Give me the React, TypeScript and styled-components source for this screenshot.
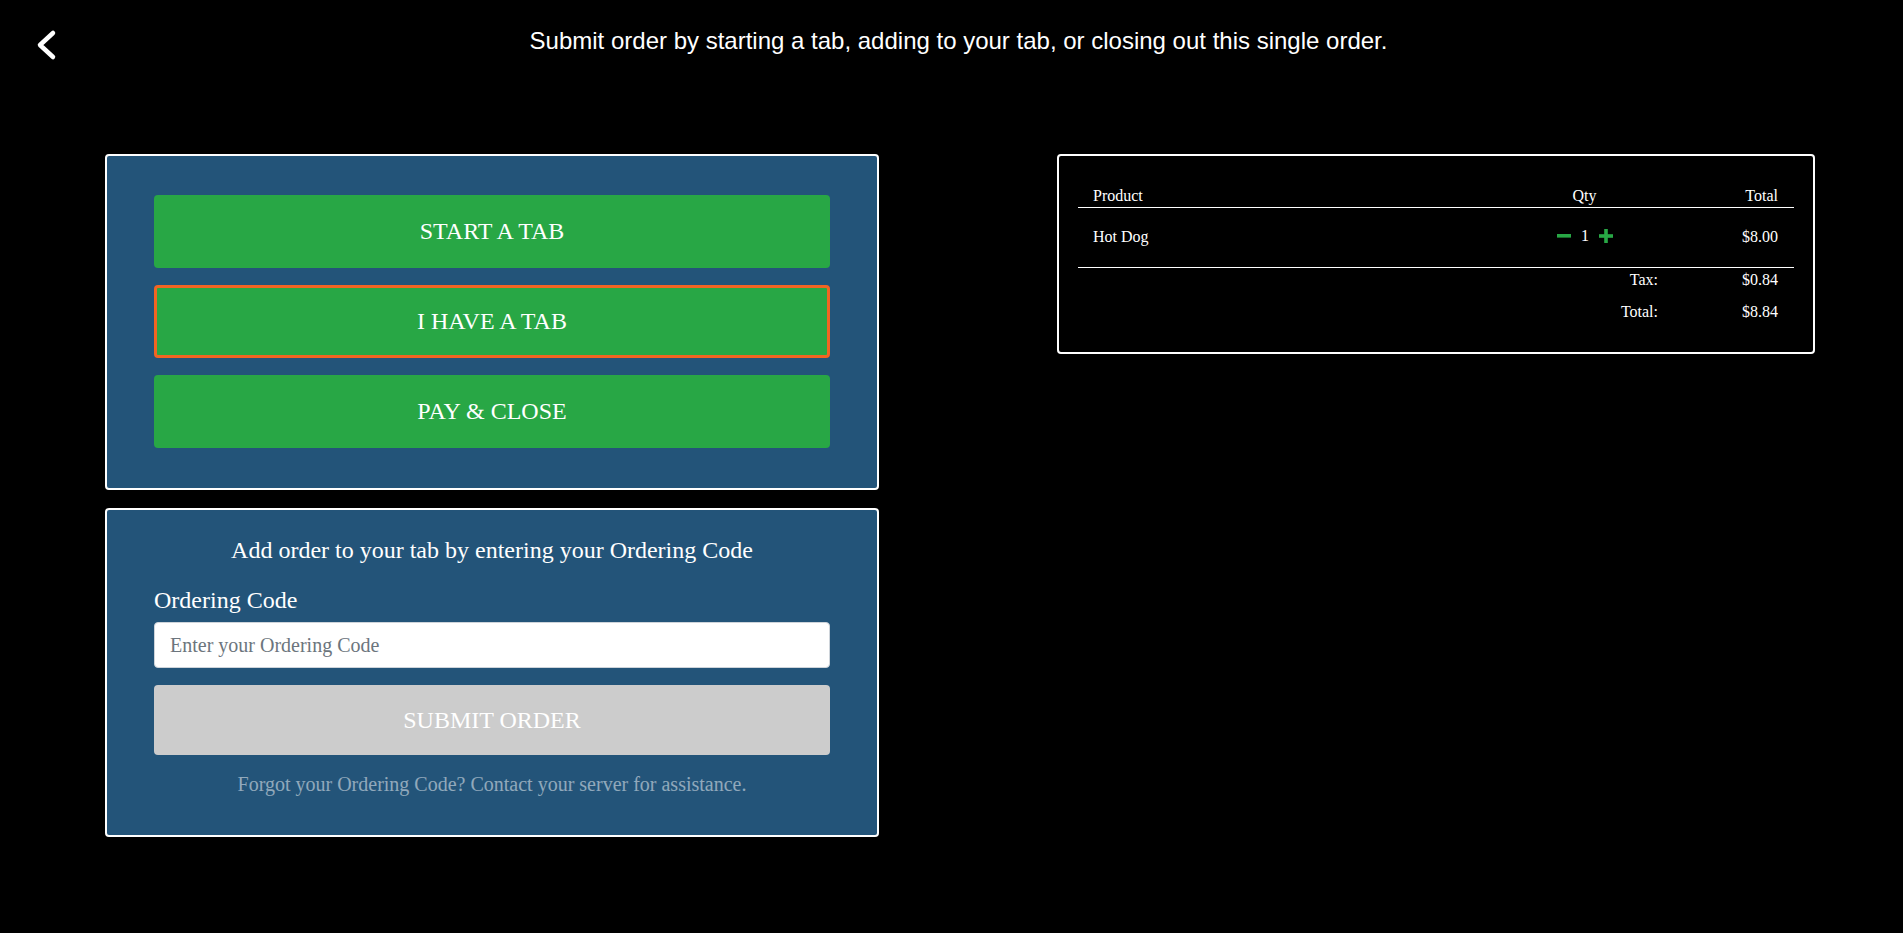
import * as React from "react";
import styled, { createGlobalStyle } from "styled-components";

const GlobalStyle = createGlobalStyle`
  body {
    margin: 0;
    background: #000;
    color: #fff;
    font-family: "Liberation Serif", "Times New Roman", serif;
  }
`;

interface IOrderItem {
  id: number;
  name: string;
  qty: number;
  price: number;
}

const items: IOrderItem[] = [{ id: 1, name: "Hot Dog", qty: 1, price: 8 }];
const TAX = 0.84;

function money(value: number) {
  return `$${value.toFixed(2)}`;
}

function MinusIcon() {
  return (
    <svg width="14" height="14" viewBox="0 0 14 14">
      <rect x="0" y="5" width="14" height="3.6" fill="#28a745" />
    </svg>
  );
}

function PlusIcon() {
  return (
    <svg width="14" height="14" viewBox="0 0 14 14">
      <rect x="0" y="5.2" width="14" height="3.6" fill="#28a745" />
      <rect x="5.2" y="0" width="3.6" height="14" fill="#28a745" />
    </svg>
  );
}

function App() {
  const subtotal = items.reduce((sum, item) => sum + item.price * item.qty, 0);

  return (
    <Page>
      <GlobalStyle />
      <Header>
        <BackButton aria-label="Back">
          <svg width="22" height="32" viewBox="0 0 22 32">
            <polyline
              points="17,4 4,16 17,28"
              fill="none"
              stroke="#fff"
              strokeWidth="4.5"
              strokeLinecap="round"
              strokeLinejoin="round"
            />
          </svg>
        </BackButton>
        <Title>
          Submit order by starting a tab, adding to your tab, or closing out
          this single order.
        </Title>
      </Header>

      <Main>
        <LeftColumn>
          <Panel $padding="39px 47px 40px">
            <ChoiceList>
              <ChoiceButton>START A TAB</ChoiceButton>
              <ChoiceButton $active>I HAVE A TAB</ChoiceButton>
              <ChoiceButton>PAY &amp; CLOSE</ChoiceButton>
            </ChoiceList>
          </Panel>

          <Panel $padding="27px 47px 39px">
            <PanelHeading>
              Add order to your tab by entering your Ordering Code
            </PanelHeading>
            <Label htmlFor="ordering-code">Ordering Code</Label>
            <CodeInput
              id="ordering-code"
              placeholder="Enter your Ordering Code"
            />
            <SubmitButton disabled>SUBMIT ORDER</SubmitButton>
            <HelpText>
              Forgot your Ordering Code? Contact your server for assistance.
            </HelpText>
          </Panel>
        </LeftColumn>

        <CartPanel>
          <CartTable>
            <colgroup>
              <col />
              <col style={{ width: 178 }} />
              <col style={{ width: 120 }} />
            </colgroup>
            <thead>
              <HeadRow>
                <HeadCell $align="left">Product</HeadCell>
                <HeadCell $align="center">Qty</HeadCell>
                <HeadCell $align="right">Total</HeadCell>
              </HeadRow>
            </thead>
            <tbody>
              {items.map((item) => (
                <ItemRow key={item.id}>
                  <ItemCell $align="left">{item.name}</ItemCell>
                  <ItemCell $align="center">
                    <QtyControl>
                      <QtyButton aria-label="Decrease">
                        <MinusIcon />
                      </QtyButton>
                      <span>{item.qty}</span>
                      <QtyButton aria-label="Increase">
                        <PlusIcon />
                      </QtyButton>
                    </QtyControl>
                  </ItemCell>
                  <ItemCell $align="right">
                    {money(item.price * item.qty)}
                  </ItemCell>
                </ItemRow>
              ))}
            </tbody>
            <tfoot>
              <tr>
                <SumCell />
                <SumCell $align="right">Tax:</SumCell>
                <SumCell $align="right">{money(TAX)}</SumCell>
              </tr>
              <tr>
                <SumCell />
                <SumCell $align="right">Total:</SumCell>
                <SumCell $align="right">{money(subtotal + TAX)}</SumCell>
              </tr>
            </tfoot>
          </CartTable>
        </CartPanel>
      </Main>
    </Page>
  );
}

const Page = styled.div`
  min-height: 933px;
  background: #000;
`;

const Header = styled.header`
  display: flex;
  align-items: flex-start;
  height: 154px;
  padding: 24px 56px 0 0;
  box-sizing: border-box;
`;

const BackButton = styled.button`
  width: 70px;
  padding: 5px 0 0 36px;
  border: none;
  background: transparent;
  text-align: left;
  cursor: pointer;
  box-sizing: border-box;
  svg {
    display: block;
  }
`;

const Title = styled.h1`
  flex: 1;
  margin: 3px 0 0;
  font-family: "Liberation Sans", Arial, sans-serif;
  font-size: 24px;
  font-weight: normal;
  text-align: center;
  color: #fff;
`;

const Main = styled.main`
  display: flex;
  align-items: flex-start;
  gap: 178px;
  padding-left: 105px;
`;

const LeftColumn = styled.div`
  display: flex;
  flex-direction: column;
  gap: 18px;
  width: 774px;
`;

const Panel = styled.section<{ $padding: string }>`
  display: flex;
  flex-direction: column;
  padding: ${(props) => props.$padding};
  background: #235479;
  border: 2px solid #fff;
  border-radius: 4px;
  box-sizing: border-box;
`;

const ChoiceList = styled.div`
  display: flex;
  flex-direction: column;
  gap: 17px;
`;

const ChoiceButton = styled.button<{ $active?: boolean }>`
  height: 73px;
  border: ${(props) => (props.$active ? "3px solid #f26522" : "none")};
  border-radius: 4px;
  background: #28a745;
  color: #fff;
  font-family: "Liberation Serif", "Times New Roman", serif;
  font-size: 24px;
  cursor: pointer;
  box-sizing: border-box;
`;

const PanelHeading = styled.h2`
  margin: 0 0 23px;
  font-size: 24px;
  font-weight: normal;
  text-align: center;
`;

const Label = styled.label`
  margin-bottom: 8px;
  font-size: 24px;
`;

const CodeInput = styled.input`
  height: 46px;
  padding: 0 15px;
  border: 1px solid #ced4da;
  border-radius: 4px;
  background: #fff;
  font-family: "Liberation Serif", "Times New Roman", serif;
  font-size: 20px;
  color: #495057;
  box-sizing: border-box;
  &::placeholder {
    color: #6c757d;
  }
`;

const SubmitButton = styled.button`
  height: 70px;
  margin-top: 17px;
  border: none;
  border-radius: 4px;
  background: #ccc;
  color: #fff;
  font-family: "Liberation Serif", "Times New Roman", serif;
  font-size: 24px;
`;

const HelpText = styled.p`
  margin: 18px 0 0;
  font-size: 20px;
  text-align: center;
  color: rgba(255, 255, 255, 0.5);
`;

const CartPanel = styled.section`
  width: 758px;
  padding: 20px 19px;
  border: 2px solid #fff;
  border-radius: 4px;
  box-sizing: border-box;
`;

const CartTable = styled.table`
  width: 100%;
  border-collapse: collapse;
  table-layout: fixed;
  font-size: 16px;
  color: #fff;
`;

type Align = "left" | "center" | "right";

const HeadRow = styled.tr`
  border-bottom: 1px solid #fff;
`;

const HeadCell = styled.th<{ $align: Align }>`
  padding: 11px 16px 2px 15px;
  font-weight: normal;
  text-align: ${(props) => props.$align};
`;

const ItemRow = styled.tr`
  border-bottom: 1px solid #fff;
`;

const ItemCell = styled.td<{ $align: Align }>`
  padding: 19px 16px 20px 15px;
  text-align: ${(props) => props.$align};
  vertical-align: middle;
`;

const SumCell = styled.td<{ $align?: Align }>`
  padding: 3px 16px 11px 15px;
  text-align: ${(props) => props.$align || "left"};
`;

const QtyControl = styled.div`
  display: inline-flex;
  align-items: center;
  gap: 10px;
  padding-left: 1px;
`;

const QtyButton = styled.button`
  display: flex;
  padding: 0;
  border: none;
  background: transparent;
  cursor: pointer;
`;

export default App;
